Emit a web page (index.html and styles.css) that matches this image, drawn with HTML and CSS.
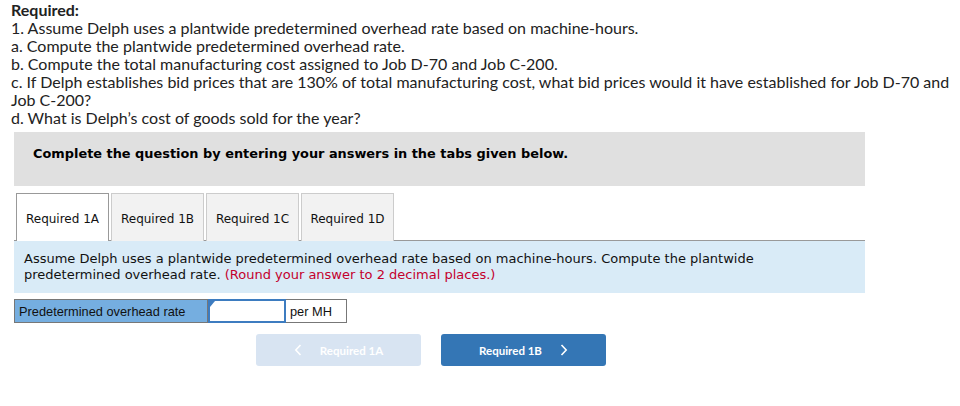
FILE: index.html
```html
<!DOCTYPE html>
<html>
<head>
<meta charset="utf-8">
<link rel="stylesheet" href="styles.css">
</head>
<body>
<div class="page">
  <div class="req">
    <div class="req-title">Required:</div>
    <div>1. Assume Delph uses a plantwide predetermined overhead rate based on machine-hours.</div>
    <div>a. Compute the plantwide predetermined overhead rate.</div>
    <div>b. Compute the total manufacturing cost assigned to Job D-70 and Job C-200.</div>
    <div>c. If Delph establishes bid prices that are 130% of total manufacturing cost, what bid prices would it have established for Job D-70 and Job C-200?</div>
    <div>d. What is Delph’s cost of goods sold for the year?</div>
  </div>
  <div class="main">
    <div class="notice">Complete the question by entering your answers in the tabs given below.</div>
    <div class="tabs">
      <div class="tab active">Required 1A</div>
      <div class="tab">Required 1B</div>
      <div class="tab">Required 1C</div>
      <div class="tab">Required 1D</div>
    </div>
    <div class="panel">Assume Delph uses a plantwide predetermined overhead rate based on machine-hours. Compute the plantwide predetermined overhead rate. <span class="red">(Round your answer to 2 decimal places.)</span></div>
    <div class="row">
      <div class="cell label">Predetermined overhead rate</div>
      <div class="cell input"><span class="tri"></span></div>
      <div class="cell unit">per MH</div>
    </div>
    <div class="nav">
      <div class="btn prev"><svg class="chev left" width="8" height="12" viewBox="0 0 8 12"><path d="M6.5 1 L1.8 6 L6.5 11" fill="none" stroke="#fff" stroke-width="1.6"/></svg>Required 1A</div>
      <div class="btn next">Required 1B<svg class="chev right" width="8" height="12" viewBox="0 0 8 12"><path d="M1.5 1 L6.2 6 L1.5 11" fill="none" stroke="#fff" stroke-width="1.6"/></svg></div>
    </div>
  </div>
</div>
</body>
</html>
```

FILE: styles.css
```css
html, body { margin: 0; padding: 0; background: #fff; }
.page { padding-top: 1px; }
.req {
  font-family: Lato, "Open Sans", sans-serif;
  font-size: 16px;
  line-height: 18px;
  color: #222;
  padding-left: 11px;
  padding-right: 0;
}
.req-title { font-weight: bold; }
.main { padding-left: 14px; width: 851px; margin-top: 5px; }
.notice {
  background: #e0e0e0;
  height: 54px;
  box-sizing: border-box;
  padding: 14px 0 0 19px;
  font-family: "DejaVu Sans", Verdana, sans-serif;
  font-weight: bold;
  font-size: 12.9px;
  color: #000;
}
.tabs {
  display: flex;
  gap: 2px;
  margin-top: 7px;
  padding-left: 2px;
  border-bottom: 1px solid #999;
  height: 47px;
}
.tab {
  box-sizing: border-box;
  width: 93px;
  height: 48px;
  border: 1px solid #ccc;
  border-bottom: none;
  background: #f2f2f2;
  font-family: "DejaVu Sans", Verdana, sans-serif;
  font-size: 12px;
  color: #111;
  display: flex;
  align-items: center;
  justify-content: center;
  padding-top: 2px;
}
.tab.active {
  background: #fff;
  border-color: #999;
  position: relative;
  z-index: 1;
}
.panel {
  background: #d9ebf7;
  height: 52px;
  box-sizing: border-box;
  padding: 10px 90px 0 10px;
  font-family: "DejaVu Sans", Verdana, sans-serif;
  font-size: 13px;
  line-height: 16px;
  color: #111;
}
.red { color: #c4002d; }
.row { display: flex; margin-top: 6px; height: 24px; }
.cell { box-sizing: border-box; height: 24px; font-family: "Liberation Sans", Arial, sans-serif; font-size: 12.8px; display: flex; align-items: center; }
.label { width: 194px; background: #75aee0; border: 1px solid #777; padding-left: 4px; color: #111; }
.input { width: 78px; background: #fff; border: 2px solid #3d7cc0; position: relative; }
.tri { position: absolute; left: 0; top: 0; width: 0; height: 0; border-top: 6px solid #3d7cc0; border-right: 5px solid transparent; }
.unit { width: 61px; background: #fff; border: 1px solid #777; border-left: none; padding-left: 4px; color: #111; }
.nav { display: flex; gap: 20px; margin-top: 11px; padding-left: 242px; }
.btn {
  width: 165px; height: 32px; border-radius: 3px;
  display: flex; align-items: center; justify-content: center;
  font-family: Lato, "Open Sans", sans-serif; font-weight: bold; font-size: 11.5px; color: #fff;
}
.prev { background: #d8e4f2; }
.next { background: #3476b5; }
.chev { display: block; }
.chev.left { margin-right: 18px; }
.chev.right { margin-left: 18px; }
```
